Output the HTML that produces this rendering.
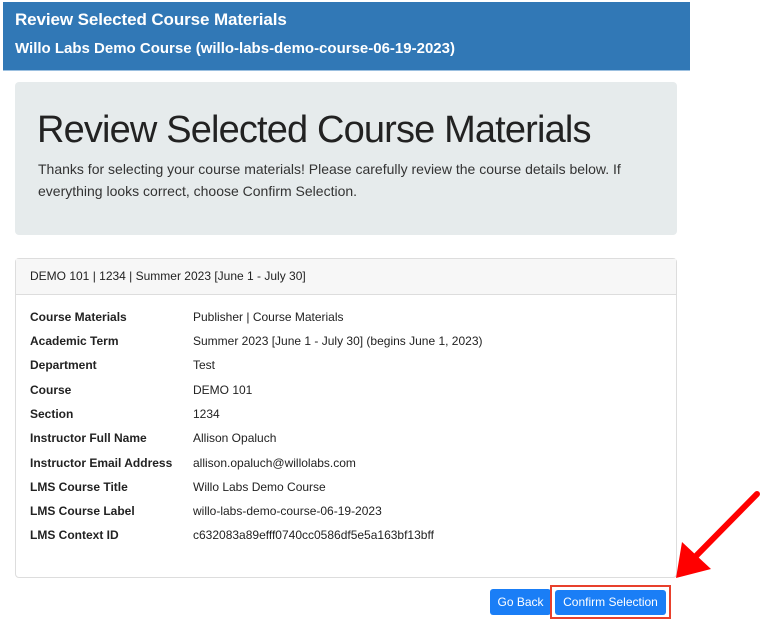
<!DOCTYPE html>
<html><head><style>
body{margin:0;width:768px;height:630px;background:#fff;position:relative;font-family:"Liberation Sans",Arial,sans-serif;overflow:hidden}
.a{position:absolute}
.hdr{left:3px;top:2px;width:687px;height:68px;background:#3178b6;color:#fff;font-weight:bold;border-bottom:1px solid #9cc0e0}
.jum{left:15px;top:82px;width:662px;height:153px;background:#e6ebec;border-radius:4px}
.card{left:15px;top:258px;width:660px;height:318px;border:1px solid #ddd;border-radius:4px}
.ch{left:0;top:0;width:660px;height:35px;background:#f7f7f7;border-bottom:1px solid #ddd;font-size:12px;color:#222;line-height:35px;text-indent:14px}
.r{font-size:12px;color:#222;left:0;width:600px;height:16px}
.r b{position:absolute;left:14px}
.r span{position:absolute;left:177px}
.btn{background:#1a7ef6;color:#fff;font-size:12px;border-radius:3px;text-align:center;line-height:26px}
</style></head><body>
<div class="a hdr"><div class="a" style="left:12px;top:8px;font-size:17px;letter-spacing:-0.1px">Review Selected Course Materials</div><div class="a" style="left:12px;top:38px;font-size:15px">Willo Labs Demo Course (willo-labs-demo-course-06-19-2023)</div></div>
<div class="a jum"><div class="a" style="left:22px;top:27px;font-size:38px;color:#222;white-space:nowrap;letter-spacing:-0.85px">Review Selected Course Materials</div>
<div class="a" style="left:23px;top:76px;width:600px;font-size:14px;line-height:22px;color:#333">Thanks for selecting your course materials! Please carefully review the course details below. If everything looks correct, choose Confirm Selection.</div></div>
<div class="a card"><div class="a ch">DEMO 101 | 1234 | Summer 2023 [June 1 - July 30]</div>
<div class="a r" style="top:51px"><b>Course Materials</b><span>Publisher | Course Materials</span></div>
<div class="a r" style="top:75px"><b>Academic Term</b><span>Summer 2023 [June 1 - July 30] (begins June 1, 2023)</span></div>
<div class="a r" style="top:99px"><b>Department</b><span>Test</span></div>
<div class="a r" style="top:124px"><b>Course</b><span>DEMO 101</span></div>
<div class="a r" style="top:148px"><b>Section</b><span>1234</span></div>
<div class="a r" style="top:172px"><b>Instructor Full Name</b><span>Allison Opaluch</span></div>
<div class="a r" style="top:197px"><b>Instructor Email Address</b><span>allison.opaluch@willolabs.com</span></div>
<div class="a r" style="top:221px"><b>LMS Course Title</b><span>Willo Labs Demo Course</span></div>
<div class="a r" style="top:245px"><b>LMS Course Label</b><span>willo-labs-demo-course-06-19-2023</span></div>
<div class="a r" style="top:269px"><b>LMS Context ID</b><span>c632083a89efff0740cc0586df5e5a163bf13bff</span></div>
</div>
<div class="a btn" style="left:490px;top:589px;width:61px;height:26px">Go Back</div>
<div class="a" style="left:550px;top:585px;width:117px;height:30px;border:2px solid #e8402c"></div>
<div class="a btn" style="left:555px;top:590px;width:111px;height:25px;line-height:25px">Confirm Selection</div>
<svg class="a" style="left:0;top:0" width="768" height="630"><line x1="757" y1="494" x2="696" y2="556" stroke="#f00" stroke-width="6" stroke-linecap="round"/><polygon points="682,542 711,569 676,578" fill="#f00"/></svg>
</body></html>
